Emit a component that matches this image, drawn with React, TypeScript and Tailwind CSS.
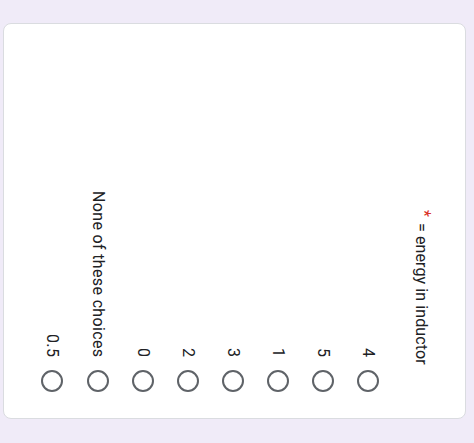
import React from 'react';

const options = ['4', '5', '1', '3', '2', '0', 'None of these choices', '0.5'];

const Radio = () => (
  <div className="w-[22px] h-[22px] rounded-full border-2 border-[#5f6368] bg-white" />
);

const App = () => {
  return (
    <div className="w-[474px] h-[443px] bg-[#f0ebf8] pt-[23px] pl-[3px] pr-[8px] pb-[24px] font-['Roboto',sans-serif]">
      <div className="h-full bg-white rounded-lg border border-[#dadce0] flex flex-row-reverse items-end pr-[13px] pl-[26px]">
        {/* question title */}
        <div className="w-[62px] h-full flex flex-col items-center justify-end pb-[53px]">
          <span className="[writing-mode:vertical-rl] text-[16px] leading-[24px] text-[#202124] tracking-[0.1px]">
            <span className="text-[#d93025] relative left-[3px] pb-[2px]">*</span>
            <span> = energy in inductor</span>
          </span>
        </div>

        {options.map(opt => (
          <label key={opt} className="w-[45.4px] flex flex-col items-center pb-[26px] cursor-pointer">
            <span className="[writing-mode:vertical-rl] text-[16px] leading-[20px] text-[#202124] tracking-[0.35px]">
              {opt}
            </span>
            <div className="mt-[13px]">
              <Radio />
            </div>
          </label>
        ))}
      </div>
    </div>
  );
};

export default App;
